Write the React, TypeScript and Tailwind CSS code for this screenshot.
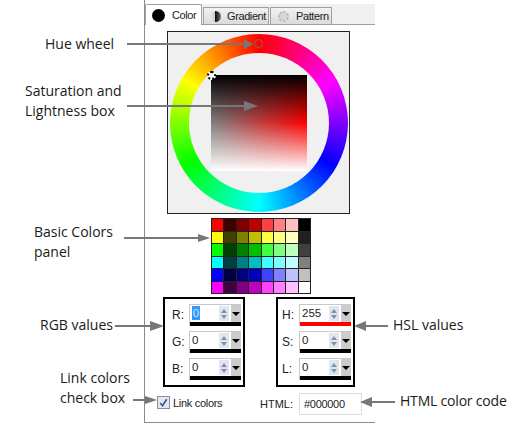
const swatches = [
  ["#ff0000", "#400000", "#800000", "#c00000", "#ff4040", "#ff8080", "#ffc0c0", "#000000"],
  ["#ffff00", "#404000", "#808000", "#c0c000", "#ffff40", "#ffff80", "#ffffc0", "#202020"],
  ["#00ff00", "#004000", "#008000", "#00c000", "#40ff40", "#80ff80", "#c0ffc0", "#404040"],
  ["#00ffff", "#004040", "#008080", "#00c0c0", "#40ffff", "#80ffff", "#c0ffff", "#808080"],
  ["#0000ff", "#000040", "#000080", "#0000c0", "#4040ff", "#8080ff", "#c0c0ff", "#c0c0c0"],
  ["#ff00ff", "#400040", "#800080", "#c000c0", "#ff40ff", "#ff80ff", "#ffc0ff", "#ffffff"],
]

function Spin({ value, bar = "bg-black", selected = false }: { value: string; bar?: string; selected?: boolean }) {
  return (
    <div className="flex h-[22px] w-[52px] flex-col border-t border-l border-[#c8c8c8]">
      <div className="flex h-[18px] items-start bg-white">
        <div className="flex-1 pl-[2px] pt-[1px] text-[11.5px] leading-[14px] text-[#222]">
          {selected ? <span className="inline-block w-[8px] bg-[#3399ff] text-center text-[#cfe6ff]">{value}</span> : value}
        </div>
        <div className="mt-[1px] flex h-[15px] w-[10px] flex-col items-center justify-center gap-[2px] bg-[#dfe6f0]">
          <div className="h-0 w-0 border-x-[3px] border-b-[4px] border-x-transparent border-b-[#7f93ab]" />
          <div className="h-0 w-0 border-x-[3px] border-t-[4px] border-x-transparent border-t-[#7f93ab]" />
        </div>
        <div className="ml-[2px] flex h-[17px] w-[10px] items-center justify-center bg-[#cccccc]">
          <div className="h-0 w-0 border-x-[4px] border-t-[4px] border-x-transparent border-t-black" />
        </div>
      </div>
      <div className={`h-[4px] ${bar}`} />
    </div>
  )
}

function Row({ label, children }: { label: string; children: React.ReactNode }) {
  return (
    <div className="flex items-center justify-between">
      <span className="text-[12px] text-[#222]">{label}:</span>
      {children}
    </div>
  )
}

function Callout({ className, children }: { className: string; children: React.ReactNode }) {
  return (
    <div className={`absolute whitespace-nowrap text-[14px] leading-[20px] text-[#1a1a1a] ${className}`}>{children}</div>
  )
}

export default function App() {
  return (
    <div className="relative h-[424px] w-[528px] overflow-hidden bg-white font-['Open_Sans','Noto_Sans',sans-serif]">
      {/* Panel */}
      <div className="ml-[144px] flex h-[423px] w-[231px] flex-col border-b border-l border-[#8c8c8c] pt-[4px] font-['Liberation_Sans',sans-serif]">
        <div className="flex h-[21px] items-end gap-[1px] border-b border-[#a0a0a0] bg-[#f0f0f0] text-[11px] tracking-[-0.4px] text-[#222]">
          <div className="relative top-[1px] flex h-[21px] w-[57px] items-center gap-[7px] rounded-t-[2px] border border-b-0 border-[#a0a0a0] bg-white pl-[6px]">
            <span className="h-[13px] w-[13px] rounded-full bg-black" />
            Color
          </div>
          <div className="flex h-[17px] w-[66px] items-center gap-[6px] border border-b-0 border-[#a0a0a0] bg-[linear-gradient(to_bottom,#f2f2f2,#dcdcdc)] pl-[6px]">
            <span className="h-[11px] w-[11px] rounded-full bg-[linear-gradient(to_right,#e8e8e8_0%,#d0d0d0_45%,#111_50%,#777_100%)]" />
            Gradient
          </div>
          <div className="flex h-[17px] w-[62px] items-center gap-[7px] border border-b-0 border-[#a0a0a0] bg-[linear-gradient(to_bottom,#f2f2f2,#dcdcdc)] pl-[7px]">
            <span className="h-[11px] w-[11px] rounded-full border-2 border-dotted border-[#b8b8b8] bg-[#d8d8d8]" />
            Pattern
          </div>
        </div>

        {/* Wheel */}
        <div className="ml-[22px] mt-[6px] flex h-[183px] w-[183px] items-center justify-center border border-[#222] bg-[#f0f0f0]">
          <div className="flex h-[178px] w-[178px] items-center justify-center rounded-full bg-[conic-gradient(#ff0000,#ff00ff,#0000ff,#00ffff,#00ff00,#ffff00,#ff0000)]">
            <div className="flex h-[140px] w-[140px] items-center justify-center rounded-full bg-[#f0f0f0]">
              <div className="h-[96px] w-[96px] bg-[linear-gradient(to_bottom,#000_0%,transparent_50%,transparent_50%,#fff_100%),linear-gradient(to_right,#808080,#ff0000)]" />
            </div>
          </div>
        </div>

        {/* Basic colors */}
        <div className="ml-[66px] mt-[4px] grid w-[100px] grid-cols-8 border-t border-l border-[#222]">
          {swatches.flat().map((c, i) => (
            <div key={i} className="h-[12.5px] border-r border-b border-[#222]" style={{ backgroundColor: c }} />
          ))}
        </div>

        {/* Value groups */}
        <div className="mt-[3px] ml-[18px] flex gap-[31px]">
          <div className="flex h-[90px] w-[82px] flex-col justify-between border-2 border-black py-[5px] pl-[7px] pr-[2px]">
            <Row label="R"><Spin value="0" selected /></Row>
            <Row label="G"><Spin value="0" /></Row>
            <Row label="B"><Spin value="0" /></Row>
          </div>
          <div className="flex h-[90px] w-[79px] flex-col justify-between border-2 border-black py-[5px] pl-[4px] pr-[2px]">
            <Row label="H"><Spin value="255" bar="bg-[#ff0000]" /></Row>
            <Row label="S"><Spin value="0" /></Row>
            <Row label="L"><Spin value="0" /></Row>
          </div>
        </div>

        {/* Footer */}
        <div className="mt-[6px] flex items-center pl-[12px] pr-[13px] text-[11px] text-[#222]">
          <div className="mb-[3px] flex h-[13px] w-[13px] items-center justify-center border border-[#8e8f8f] bg-[#dfe8f6]">
            <svg viewBox="0 0 12 12" className="h-[11px] w-[11px]">
              <path d="M2.5 6.5 L5 9.5 L9.5 2.5" fill="none" stroke="#3a4f8f" strokeWidth="1.8" />
            </svg>
          </div>
          <span className="mb-[1px] ml-[3px] tracking-[-0.3px]">Link colors</span>
          <span className="ml-auto">HTML:</span>
          <div className="ml-[6px] flex h-[22px] w-[63px] items-center border border-[#dddddd] bg-white pl-[4px] tracking-[-0.3px]">#000000</div>
        </div>
      </div>

      {/* Wheel handles */}
      <div className="absolute left-[254px] top-[39px] h-[9px] w-[9px] rounded-full border border-[#6e6e6e]" />
      <div className="absolute left-[207px] top-[71px] h-[9px] w-[9px] rounded-full border-2 border-dotted border-black bg-white" />

      {/* Callout arrows */}
      <svg className="absolute inset-0 h-[424px] w-[528px]" viewBox="0 0 528 424">
        <g stroke="#777" strokeWidth="2" fill="#777">
          <path d="M127 44H246" />
          <path d="M127 106H246" />
          <path d="M124 238H200" />
          <path d="M115 326H155" />
          <path d="M133 400H148" />
          <path d="M388 326H362" />
          <path d="M395 402H368" />
        </g>
        <g fill="#777">
          <path d="M244 39L253 44L244 49Z" />
          <path d="M244 101L258 106L244 111Z" />
          <path d="M198 234L210 238L198 242Z" />
          <path d="M150 321L164 326L150 331Z" />
          <path d="M145 396L157 400L145 404Z" />
          <path d="M366 321L354 326L366 331Z" />
          <path d="M372 397L360 402L372 407Z" />
        </g>
      </svg>

      {/* Callout labels */}
      <Callout className="left-[45px] top-[34px]">Hue wheel</Callout>
      <Callout className="left-[25px] top-[81px]">Saturation and<br />Lightness box</Callout>
      <Callout className="left-[34px] top-[222px]">Basic Colors<br />panel</Callout>
      <Callout className="left-[40px] top-[315px]">RGB values</Callout>
      <Callout className="left-[393px] top-[315px]">HSL values</Callout>
      <Callout className="left-[60px] top-[368px]">Link colors<br />check box</Callout>
      <Callout className="left-[400px] top-[391px] tracking-[-0.2px]">HTML color code</Callout>
    </div>
  )
}
